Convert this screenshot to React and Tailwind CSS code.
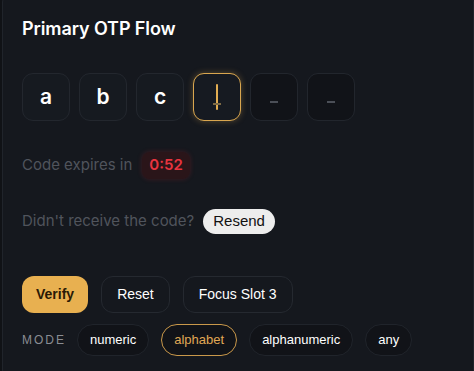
import { useState } from 'react';

const slots = ['a', 'b', 'c', '', '', ''];
const modes = ['numeric', 'alphabet', 'alphanumeric', 'any'];

const OtpSlot = ({ value, active }) => {
  if (active) {
    return (
      <div className="relative w-[48px] h-[48px] rounded-[11px] border-[1.5px] border-[#d9a64f] bg-[#161a21] shadow-[0_0_6px_rgba(217,166,79,0.35)] flex items-center justify-center">
        <span className="absolute left-1/2 -translate-x-1/2 top-[29px] w-[8px] h-[1.5px] bg-[#7d6a45]" />
        <span className="w-[2px] h-[26px] bg-[#e2ad52] rounded-full" />
      </div>
    );
  }
  if (!value) {
    return (
      <div className="w-[48px] h-[48px] rounded-[11px] border border-[#22262d] bg-[#111318] flex items-center justify-center">
        <span className="mt-[10px] w-[8px] h-[1.5px] bg-[#4b4f57]" />
      </div>
    );
  }
  return (
    <div className="w-[48px] h-[48px] rounded-[11px] border border-[#23272e] bg-[#161a20] flex items-center justify-center text-[21px] font-semibold text-white">
      {value}
    </div>
  );
};

export default function App() {
  const [mode, setMode] = useState('alphabet');

  return (
    <div className="w-[474px] h-[371px] overflow-hidden bg-[#101216] font-['Inter',sans-serif]">
      <div className="ml-[2px] -mt-[14px] h-[400px] rounded-2xl border border-[#20242b] bg-[#15181e] pl-[19px] pt-[28px]">
        <h1 className="text-[18px] font-semibold text-white tracking-[-0.1px]">Primary OTP Flow</h1>

        <div className="mt-[31px] flex gap-[9px]">
          {slots.map((v, i) => (
            <OtpSlot key={i} value={v} active={i === 3} />
          ))}
        </div>

        <div className="mt-[31px] flex items-center gap-[10px]">
          <span className="text-[15px] text-[#50545c]">Code expires in</span>
          <span className="px-[7px] py-[2px] rounded-lg bg-[#2a1519] text-[15px] font-semibold text-[#e8343f] shadow-[0_0_5px_rgba(200,40,50,0.25)]">0:52</span>
        </div>

        <div className="mt-[30px] flex items-center gap-[9px]">
          <span className="text-[15px] text-[#50545c]">Didn&apos;t receive the code?</span>
          <button className="h-[25px] px-[10px] rounded-full bg-[#ededed] text-[15px] text-[#111] font-['Liberation_Sans',sans-serif]">Resend</button>
        </div>

        <div className="mt-[42px] flex gap-[13px] font-['Liberation_Sans',sans-serif]">
          <button className="h-[37px] px-[14px] rounded-xl bg-[#e8b050] text-[14px] font-bold text-[#2a1a06]">Verify</button>
          <button className="h-[37px] px-[15px] rounded-xl border border-[#252930] bg-[#15181e] text-[14px] text-white">Reset</button>
          <button className="h-[37px] px-[15px] rounded-xl border border-[#252930] bg-[#15181e] text-[14px] text-white">Focus Slot 3</button>
        </div>

        <div className="mt-[11px] flex items-center font-['Liberation_Sans',sans-serif]">
          <span className="w-[55px] text-[12px] tracking-[2px] text-[#8a8d93]">MODE</span>
          <div className="flex gap-[12px]">
            {modes.map((m) => (
              <button
                key={m}
                onClick={() => setMode(m)}
                className={
                  m === mode
                    ? 'h-[32px] px-[12px] rounded-full border-[1.5px] border-[#c9984a] bg-[#111318] text-[13px] text-[#e0a855]'
                    : 'h-[32px] px-[12px] rounded-full border border-[#20242b] bg-[#111318] text-[13px] text-white'
                }
              >
                {m}
              </button>
            ))}
          </div>
        </div>
      </div>
    </div>
  );
}
